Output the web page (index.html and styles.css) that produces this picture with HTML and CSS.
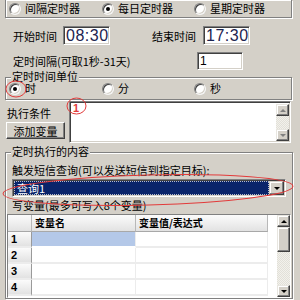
FILE: index.html
```html
<!DOCTYPE html>
<html lang="zh-CN">
<head>
	<meta charset="UTF-8">
	<title>定时器</title>
	<link rel="stylesheet" href="styles.css">
</head>
<body>
<div class="page">
	<div class="grp grp_type">
		<div class="radios">
			<label class="rb"><span class="radio"></span>间隔定时器</label>
			<label class="rb"><span class="radio on"></span>每日定时器</label>
			<label class="rb"><span class="radio"></span>星期定时器</label>
		</div>
	</div>

	<div class="row row_time">
		<span class="lbl">开始时间</span>
		<span class="edit time">08:30</span>
		<span class="lbl lbl_end">结束时间</span>
		<span class="edit time">17:30</span>
	</div>

	<div class="row row_gap">
		<span class="lbl lbl_gap">定时间隔(可取1秒-31天)</span>
		<span class="edit num">1</span>
	</div>

	<div class="grp grp_unit">
		<span class="legend">定时时间单位</span>
		<div class="radios">
			<label class="rb"><span class="radio on"></span>时</label>
			<label class="rb"><span class="radio"></span>分</label>
			<label class="rb"><span class="radio"></span>秒</label>
		</div>
	</div>

	<div class="cond">
		<div class="cond_left">
			<span class="lbl">执行条件</span>
			<span class="btn">添加变量</span>
		</div>
		<div class="memo">
			<div class="memo_text"></div>
			<div class="vscroll">
				<span class="sb_btn"><i class="arr up dis"></i></span>
				<span class="sb_track"></span>
				<span class="sb_btn"><i class="arr down dis"></i></span>
			</div>
		</div>
	</div>

	<div class="grp grp_job">
		<span class="legend">定时执行的内容</span>
		<div class="lbl sms">触发短信查询(可以发送短信到指定目标):</div>
		<div class="combo">
			<span class="combo_val">查询1</span>
			<span class="combo_btn"><i class="arr down"></i></span>
		</div>
		<div class="lbl vars">写变量(最多可写入8个变量)</div>
		<div class="grid">
			<div class="cells">
				<div class="hd"></div>
				<div class="hd">变量名</div>
				<div class="hd">变量值/表达式</div>
				<div class="rh">1</div><div class="cell sel"></div><div class="cell"></div>
				<div class="rh">2</div><div class="cell"></div><div class="cell"></div>
				<div class="rh">3</div><div class="cell"></div><div class="cell"></div>
				<div class="rh">4</div><div class="cell"></div><div class="cell"></div>
			</div>
			<div class="vscroll">
				<span class="sb_btn"><i class="arr up"></i></span>
				<span class="sb_thumb"></span>
				<span class="sb_track"></span>
				<span class="sb_btn"><i class="arr down"></i></span>
			</div>
		</div>
	</div>

	<!-- red marks drawn over the form -->
	<svg class="marks" width="300" height="300" viewBox="0 0 300 300">
		<g fill="none" stroke="#e23b3b" stroke-width="1">
			<ellipse cx="16" cy="89" rx="10" ry="8"/>
			<ellipse cx="76.5" cy="106" rx="9.5" ry="8"/>
			<ellipse cx="148" cy="190" rx="145" ry="15" transform="rotate(-1.5 148 190)"/>
		</g>
		<text x="73" y="112" fill="#e23b3b" font-size="11" font-weight="bold" font-family="Liberation Sans">1</text>
	</svg>
</div>
</body>
</html>
```

FILE: styles.css
```css
body {
	margin: 0;
	background: #d4d0c8;
	font-family: "Noto Sans CJK SC", "Liberation Sans", sans-serif;
	font-size: 11px;
	color: #000;
}
.page {
	position: relative;
	width: 300px;
	height: 300px;
	overflow: hidden;
}

/* etched group boxes */
.grp {
	position: relative;
	border: 1px solid #808080;
	box-shadow: inset 1px 1px 0 #fff, 1px 1px 0 #fff;
	margin: 0 8px 0 5px;
}
.legend {
	position: absolute;
	top: -7px;
	left: 5px;
	padding: 0 1px;
	line-height: 11px;
	background: #d4d0c8;
}
.grp_type {
	border-top: none;
	height: 17px;
}
.grp_unit {
	margin-top: 7px;
	height: 21px;
}
.grp_job {
	margin-top: 9px;
	margin-right: 7px;
	height: 135px;
	padding-top: 10px;
}

/* radio buttons */
.radios {
	display: grid;
	grid-template-columns: 93px 92px auto;
	align-items: center;
	height: 100%;
	padding-left: 3px;
}
.rb {
	display: flex;
	align-items: center;
	gap: 4px;
	line-height: 11px;
}
.radio {
	position: relative;
	width: 12px;
	height: 12px;
	box-sizing: border-box;
	border-radius: 50%;
	background: #fff;
	border: 1px solid;
	border-color: #808080 #f4f4f4 #f4f4f4 #808080;
	box-shadow: inset 1px 1px 0 #404040, inset -1px -1px 0 #d4d0c8;
}
.radio.on::after {
	content: "";
	position: absolute;
	left: 3px;
	top: 3px;
	width: 4px;
	height: 4px;
	border-radius: 50%;
	background: #000;
}

/* rows with edit boxes */
.row {
	display: flex;
	align-items: center;
	padding-left: 13px;
}
.row_time {
	margin-top: 8px;
	height: 19px;
}
.row_gap {
	margin-top: 7px;
	height: 18px;
}
.lbl {
	line-height: 14px;
	white-space: nowrap;
}
.row_time .lbl {
	width: 50px;
}
.lbl_end {
	margin-left: 42px;
	width: 51px !important;
}
.lbl_gap {
	width: 184px;
}
.edit {
	box-sizing: border-box;
	background: #fff;
	border: 1px solid;
	border-color: #808080 #fff #fff #808080;
	box-shadow: inset 1px 1px 0 #404040, inset -1px -1px 0 #d4d0c8;
}
.time {
	width: 47px;
	height: 19px;
	padding-left: 2px;
	font-family: "Liberation Sans", sans-serif;
	font-size: 16px;
	line-height: 18px;
	letter-spacing: 0.5px;
	color: #1c2450;
}
.num {
	width: 46px;
	height: 18px;
	padding-left: 2px;
	font-family: "Liberation Sans", sans-serif;
	font-size: 12px;
	line-height: 17px;
}

/* condition row */
.cond {
	display: flex;
	margin-top: 1px;
	height: 42px;
}
.cond_left {
	width: 69px;
	display: flex;
	flex-direction: column;
	align-items: flex-start;
}
.cond_left .lbl {
	margin: 5px 0 0 7px;
}
.btn {
	display: flex;
	align-items: center;
	justify-content: center;
	margin: 2px 0 0 6px;
	width: 59px;
	height: 17px;
	box-sizing: border-box;
	border: 1px solid;
	border-color: #fff #404040 #404040 #fff;
	box-shadow: inset -1px -1px 0 #808080;
	background: #d4d0c8;
	line-height: 14px;
}
.memo {
	display: flex;
	width: 222px;
	box-sizing: border-box;
	border: 1px solid;
	border-color: #808080 #fff #fff #808080;
	box-shadow: inset 1px 1px 0 #404040, inset -1px -1px 0 #d4d0c8;
	padding: 2px 1px 1px 2px;
	background: #fff;
}
.memo_text {
	flex: 1;
}

/* scrollbars */
.vscroll {
	display: flex;
	flex-direction: column;
	width: 13px;
}
.sb_btn, .sb_thumb {
	display: flex;
	align-items: center;
	justify-content: center;
	height: 12px;
	box-sizing: border-box;
	background: #d4d0c8;
	border: 1px solid;
	border-color: #e8e6e0 #404040 #404040 #e8e6e0;
	box-shadow: inset -1px -1px 0 #808080, inset 1px 1px 0 #fff;
}
.sb_thumb {
	height: 25px;
}
.sb_track {
	flex: 1;
	background-color: #f2f1ec;
	background-image: linear-gradient(45deg, #e2e0d8 25%, transparent 25%, transparent 75%, #e2e0d8 75%), linear-gradient(45deg, #e2e0d8 25%, transparent 25%, transparent 75%, #e2e0d8 75%);
	background-size: 2px 2px;
	background-position: 0 0, 1px 1px;
}
.arr {
	width: 0;
	height: 0;
	border-left: 3px solid transparent;
	border-right: 3px solid transparent;
}
.arr.up {
	border-bottom: 3px solid #000;
}
.arr.down {
	border-top: 3px solid #000;
}
.arr.up.dis {
	border-bottom-color: #808080;
}
.arr.down.dis {
	border-top-color: #808080;
}

/* job group */
.sms {
	margin-left: 6px;
}
.combo {
	display: flex;
	margin: 2px 0 0 6px;
	width: 274px;
	height: 18px;
	box-sizing: border-box;
	border: 1px solid;
	border-color: #808080 #fff #fff #808080;
	box-shadow: inset 1px 1px 0 #404040, inset -1px -1px 0 #d4d0c8;
	padding: 1px;
	background: #fff;
}
.combo_val {
	flex: 1;
	background: #0a246a;
	color: #fff;
	line-height: 14px;
	padding-left: 3px;
	outline: 1px dotted #b8bcc8;
	outline-offset: -1px;
}
.combo_btn {
	display: flex;
	align-items: center;
	justify-content: center;
	width: 15px;
	box-sizing: border-box;
	background: #d4d0c8;
	border: 1px solid;
	border-color: #d4d0c8 #404040 #404040 #d4d0c8;
	box-shadow: inset -1px -1px 0 #808080, inset 1px 1px 0 #fff;
}
.vars {
	margin: 2px 0 0 6px;
	line-height: 12px;
}
.grid {
	display: flex;
	margin: 3px 0 0 1px;
	width: 284px;
	height: 84px;
	box-sizing: border-box;
	border: 1px solid #808080;
	border-right-color: #fff;
	border-bottom-color: #fff;
	background: #fff;
}
.cells {
	flex: 1;
	display: grid;
	grid-template-columns: 24px 104px 132px;
	grid-template-rows: 17px;
	grid-auto-rows: 16px;
	align-content: start;
}
.hd, .rh {
	box-sizing: border-box;
	background: linear-gradient(#fbfbfb, #e2e2e2);
	border-right: 1px solid #b8b8b8;
	border-bottom: 1px solid #a8a8a8;
	font-weight: bold;
	font-size: 10px;
	line-height: 15px;
	padding-left: 3px;
}
.rh {
	border-bottom: 2px solid #ececec;
	border-right-color: #9a9a9a;
	font-family: "Liberation Sans", sans-serif;
	font-size: 11px;
	line-height: 14px;
}
.cell {
	border-right: 1px solid #ececec;
	border-bottom: 2px solid #ececec;
}
.cell.sel {
	background: #b4c8e8;
	border-bottom-color: #fff;
}
.grid .vscroll {
	height: 82px;
}

.marks {
	position: absolute;
	left: 0;
	top: 0;
	pointer-events: none;
}
```
